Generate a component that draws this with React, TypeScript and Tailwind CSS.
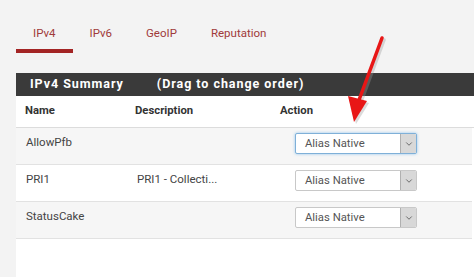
import { ChevronDown } from "lucide-react";

type AliasRow = {
  name: string;
  description: string;
  focused?: boolean;
};

const tabs = ["IPv4", "IPv6", "GeoIP", "Reputation"];

const rows: AliasRow[] = [
  { name: "AllowPfb", description: "", focused: true },
  { name: "PRI1", description: "PRI1 - Collecti..." },
  { name: "StatusCake", description: "" },
];

function AliasSelect({ focused }: { focused?: boolean }) {
  return (
    <div
      className={`flex h-[21px] w-[122px] items-stretch overflow-hidden rounded-[2px] border bg-white ${
        focused ? "border-[#7fb0d8] shadow-[0_0_3px_rgba(102,175,233,0.7)]" : "border-[#c8c8c8]"
      }`}
    >
      <span className="flex-1 pl-[9px] text-[11.3px] leading-[19px] text-[#555]">Alias Native</span>
      <span className="grid w-[16px] place-items-center border-l border-[#b0b0b0] bg-[#d8d8d8] text-[#555]">
        <ChevronDown className="h-[10px] w-[10px]" strokeWidth={2} aria-hidden="true" />
      </span>
    </div>
  );
}

export default function App() {
  return (
    <div
      className="relative h-[277px] w-[474px] overflow-hidden bg-[#f3f3f3]"
      style={{ fontFamily: "Roboto, 'Liberation Sans', sans-serif" }}
    >
      <nav className="flex pl-[16px] pt-[25px]">
        {tabs.map((tab, index) => (
          <div
            key={tab}
            className={`border-b-4 px-[17px] pb-[8px] text-[11.5px] leading-[16px] text-[#a03a3a] ${
              index === 0 ? "border-[#a32424]" : "border-transparent"
            }`}
          >
            {tab}
          </div>
        ))}
      </nav>

      <section className="ml-[16px] mt-[20px] bg-white">
        <div className="flex h-[23px] items-center bg-[#3a3a3a] pl-[14px] text-[12.5px] font-bold tracking-[0.95px] text-white">
          <span>IPv4 Summary</span>
          <span className="ml-[33px]">(Drag to change order)</span>
        </div>

        <div className="flex h-[32px] items-center border-b border-[#dcdcdc] text-[11.3px] font-bold text-[#333]">
          <div className="w-[110px] pl-[9px]">Name</div>
          <div className="w-[145px] pl-[9px]">Description</div>
          <div className="pl-[9px]">Action</div>
        </div>

        <div className="mr-[2px]">
          {rows.map((row, index) => (
            <div
              key={row.name}
              className={`flex h-[37px] items-start border-b border-[#e2e2e2] pt-[5px] text-[11.5px] leading-[18px] text-[#444] ${
                index % 2 === 0 ? "bg-[#f6f6f6]" : "bg-white"
              }`}
            >
              <div className="w-[110px] pl-[10px]">{row.name}</div>
              <div className="w-[145px] pl-[11px]">{row.description}</div>
              <div className="pl-[24px]">
                <AliasSelect focused={row.focused} />
              </div>
            </div>
          ))}
        </div>
        <div className="h-[60px]" />
      </section>

      <svg
        className="pointer-events-none absolute left-0 top-0"
        width="474"
        height="277"
        viewBox="0 0 474 277"
        aria-hidden="true"
      >
        <g opacity="0.35" transform="translate(2 2)">
          <path d="M382 38 L359 100" stroke="#999" strokeWidth="3.5" strokeLinecap="round" />
          <path d="M348 96 L354 122 L367 101 Z" fill="#999" />
        </g>
        <path d="M382 38 L359 100" stroke="#e81616" strokeWidth="3.5" strokeLinecap="round" />
        <path d="M348 96 L354 122 L367 101 Z" fill="#e81616" />
      </svg>
    </div>
  );
}
